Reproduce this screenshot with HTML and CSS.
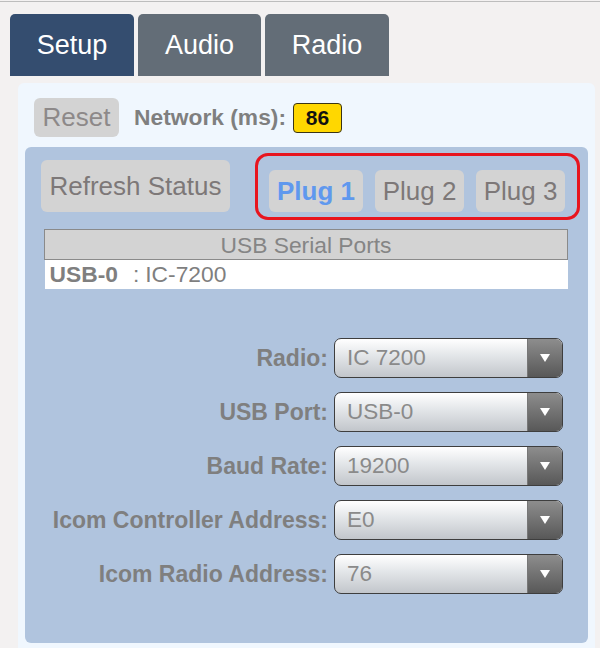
FILE: index.html
```html
<!DOCTYPE html>
<html lang="en">
<head>
    <meta charset="UTF-8">
    <meta name="viewport" content="width=device-width, initial-scale=1.0">
    <title>Remote Rig Setup</title>
    <link rel="stylesheet" href="styles.css">
</head>
<body>
    <div class="topline"></div>
    <nav class="tabs">
        <div class="tab tab-setup active">Setup</div>
        <div class="tab tab-audio">Audio</div>
        <div class="tab tab-radio">Radio</div>
    </nav>

    <div class="panel">
        <div class="status-bar">
            <button class="btn btn-reset">Reset</button>
            <span class="net-label">Network (ms):</span>
            <span class="net-badge">86</span>
        </div>

        <div class="setup-panel">
            <div class="setup-top">
                <button class="btn btn-refresh">Refresh Status</button>
                <div class="plug-group">
                    <button class="btn btn-plug selected">Plug 1</button>
                    <button class="btn btn-plug">Plug 2</button>
                    <button class="btn btn-plug">Plug 3</button>
                </div>
            </div>

            <table class="ports-table">
                <thead>
                    <tr><th>USB Serial Ports</th></tr>
                </thead>
                <tbody>
                    <tr><td><b>USB-0</b><span class="port-sep">:</span>IC-7200</td></tr>
                </tbody>
            </table>

            <div class="settings-form">
                <label>Radio:</label>
                <div class="select"><span class="select-value">IC 7200</span><span class="select-arrow"><svg width="12" height="10" viewBox="0 0 12 10"><path d="M1 1 L11 1 L6 9 Z" fill="#fff"/></svg></span></div>

                <label>USB Port:</label>
                <div class="select"><span class="select-value">USB-0</span><span class="select-arrow"><svg width="12" height="10" viewBox="0 0 12 10"><path d="M1 1 L11 1 L6 9 Z" fill="#fff"/></svg></span></div>

                <label>Baud Rate:</label>
                <div class="select"><span class="select-value">19200</span><span class="select-arrow"><svg width="12" height="10" viewBox="0 0 12 10"><path d="M1 1 L11 1 L6 9 Z" fill="#fff"/></svg></span></div>

                <label>Icom Controller Address:</label>
                <div class="select"><span class="select-value">E0</span><span class="select-arrow"><svg width="12" height="10" viewBox="0 0 12 10"><path d="M1 1 L11 1 L6 9 Z" fill="#fff"/></svg></span></div>

                <label>Icom Radio Address:</label>
                <div class="select"><span class="select-value">76</span><span class="select-arrow"><svg width="12" height="10" viewBox="0 0 12 10"><path d="M1 1 L11 1 L6 9 Z" fill="#fff"/></svg></span></div>
            </div>
        </div>
    </div>
</body>
</html>
```

FILE: styles.css
```css
body {
    margin: 0;
    font-family: "Liberation Sans", Arial, sans-serif;
    background: #f3f1f1;
    color: #808080;
    overflow: hidden;
    height: 648px;
}

.topline {
    margin-top: 1px;
    height: 1px;
    background: #bdbdbd;
}

.tabs {
    display: flex;
    gap: 4px;
    margin: 12px 0 0 10px;
}

.tab {
    width: 124px;
    height: 62px;
    display: flex;
    align-items: center;
    justify-content: center;
    background: #636d77;
    color: #fff;
    font-size: 27px;
    border-radius: 5px 5px 0 0;
}

.tab-audio {
    width: 123px;
}

.tab.active {
    background: #344d6f;
}

.panel {
    margin: 7px 0 0 18px;
    width: 577px;
    box-sizing: border-box;
    background: #f0f7fe;
    border-radius: 6px 6px 0 0;
    padding: 15px 0 0 0;
    height: 580px;
}

.status-bar {
    display: flex;
    align-items: center;
    padding-left: 16px;
}

.btn {
    font-family: "Liberation Sans", Arial, sans-serif;
    background: #d3d3d3;
    color: #7d7878;
    border: none;
    border-radius: 6px;
    padding: 0;
    font-size: 26px;
    display: flex;
    align-items: center;
    justify-content: center;
}

.btn-reset {
    width: 85px;
    height: 39px;
    color: #8d8989;
}

.net-label {
    margin-left: 15px;
    font-weight: bold;
    font-size: 22.8px;
    color: #7f7f7f;
}

.net-badge {
    margin-left: 7px;
    width: 49px;
    height: 30px;
    box-sizing: border-box;
    background: #ffd700;
    border: 1px solid #3a3415;
    border-radius: 4px;
    color: #111;
    font-weight: bold;
    font-size: 21px;
    display: flex;
    align-items: center;
    justify-content: center;
}

.setup-panel {
    margin: 10px 7px 0 7px;
    background: #b0c4de;
    border-radius: 6px;
    padding: 6px 0 49px 0;
}

.setup-top {
    display: flex;
    align-items: flex-start;
    padding-left: 16px;
}

.btn-refresh {
    margin-top: 7px;
    width: 189px;
    height: 52px;
}

.plug-group {
    margin-left: 25px;
    display: flex;
    gap: 12px;
    border: 3px solid #e8151f;
    border-radius: 13px;
    padding: 14px 12px 5px 11px;
}

.btn-plug {
    height: 42px;
    width: 89px;
}

.btn-plug.selected {
    width: 94px;
    font-weight: bold;
    color: #5f98ee;
}

.ports-table {
    margin: 9px 20px 0 19px;
    width: 524px;
    border-collapse: collapse;
    font-size: 22.8px;
}

.ports-table th {
    height: 30px;
    box-sizing: border-box;
    padding: 0;
    background: #d3d3d3;
    border: 1px solid #8a8a8a;
    font-weight: normal;
    color: #858585;
    line-height: 28px;
}

.ports-table td {
    height: 29px;
    padding: 0 0 0 5px;
    background: #fff;
    color: #7f7f7f;
    line-height: 29px;
}

.port-sep {
    margin: 0 6px 0 15px;
}

.settings-form {
    margin-top: 49px;
    display: grid;
    grid-template-columns: 1fr 229px;
    column-gap: 6px;
    row-gap: 14px;
    padding-right: 25px;
    align-items: center;
}

.settings-form label {
    text-align: right;
    font-weight: bold;
    font-size: 23px;
    color: #7f7f7f;
}

.select {
    height: 40px;
    box-sizing: border-box;
    border: 1px solid #3e3e3e;
    border-radius: 7px;
    background: linear-gradient(to bottom, #ffffff, #e2e5e8 45%, #c2c6cb);
    display: flex;
    overflow: hidden;
}

.select-value {
    flex: 1;
    padding-left: 12px;
    font-size: 22.5px;
    line-height: 38px;
    color: #8a8a8a;
}

.select-arrow {
    width: 34px;
    border-left: 1px solid #777;
    background: linear-gradient(to bottom, #8d8d8d, #585858);
    display: flex;
    align-items: center;
    justify-content: center;
}
```
